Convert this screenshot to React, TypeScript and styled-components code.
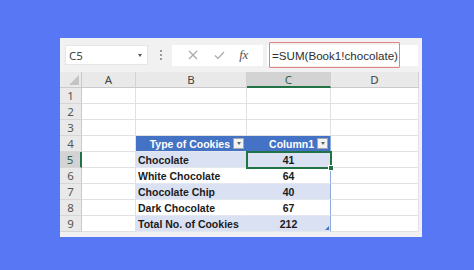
import React from 'react';
import styled, { createGlobalStyle, css } from 'styled-components';

const Global = createGlobalStyle`
  html, body { margin: 0; padding: 0; }
  body {
    width: 474px;
    height: 270px;
    overflow: hidden;
    background: #5877f5;
    font-family: "Liberation Sans", Arial, sans-serif;
  }
`;

const Page = styled.div`
  width: 474px;
  height: 270px;
  box-sizing: border-box;
  padding: 38px 0 0 60px;
  display: flex;
  align-items: flex-start;
`;

const Window = styled.div`
  width: 362px;
  height: 199px;
  background: #f1f1f1;
  display: flex;
  flex-direction: column;
`;

const FormulaBar = styled.div`
  height: 34px;
  display: flex;
  align-items: center;
  padding: 0 4px 0 5px;
  box-sizing: border-box;
`;

const NameBox = styled.div`
  width: 83px;
  height: 20px;
  box-sizing: border-box;
  background: #fff;
  border: 1px solid #e6e6e6;
  display: flex;
  align-items: center;
  justify-content: space-between;
  padding: 0 5px 0 3px;
  font-family: "Noto Sans", "Liberation Sans", sans-serif;
  font-size: 11.5px;
  color: #444;
`;

const Caret = styled.span`
  width: 0;
  height: 0;
  border-left: 2.5px solid transparent;
  border-right: 2.5px solid transparent;
  border-top: 3px solid #555;
`;

const Dots = styled.span`
  width: 2px;
  height: 12px;
  margin: 0 10px 0 12px;
  background-image: radial-gradient(circle, #9a9a9a 0.9px, transparent 1.1px);
  background-size: 2px 4px;
`;

const IconBox = styled.div`
  width: 91px;
  height: 21px;
  background: #fff;
  display: flex;
  align-items: center;
  padding: 0 10px 0 10px;
  box-sizing: border-box;
`;

const IconSlot = styled.span<{ $w: number }>`
  width: ${(p) => p.$w}px;
  display: flex;
  justify-content: center;
  align-items: center;
`;

const Fx = styled.span`
  font-family: "Liberation Serif", "Times New Roman", serif;
  font-style: italic;
  font-size: 13px;
  color: #555;
  letter-spacing: -0.5px;
`;

const FormulaInput = styled.div`
  flex: 1;
  margin-left: 4px;
  height: 21px;
  background: #fff;
  position: relative;
  display: flex;
  align-items: center;
  padding-left: 5px;
  font-family: "Liberation Sans", Arial, sans-serif;
  font-size: 11.6px;
  color: #2e2e2e;
`;

const Highlight = styled.span`
  position: absolute;
  left: 2px;
  top: -3px;
  width: 131px;
  height: 26px;
  box-sizing: border-box;
  border: 1.5px solid #e68181;
  border-radius: 1px;
  pointer-events: none;
`;

const Sheet = styled.div`
  display: grid;
  grid-template-columns: 22px 54px 111px 84px 88px;
  grid-auto-rows: 16px;
  background: #fff;
  width: 359px;
`;

const headFont = css`
  font-family: "Noto Sans", "Liberation Sans", sans-serif;
  font-size: 11.5px;
  color: #444;
  display: flex;
  align-items: center;
  justify-content: center;
  box-sizing: border-box;
`;

const Corner = styled.div`
  ${headFont};
  background: #e9e9e9;
  border-right: 1px solid #c9c9c9;
  border-bottom: 1px solid #c9c9c9;
  position: relative;
  &::after {
    content: '';
    position: absolute;
    right: 2px;
    bottom: 2px;
    width: 0;
    height: 0;
    border-left: 10px solid transparent;
    border-bottom: 10px solid #c4c4c4;
  }
`;

const ColHead = styled.div<{ $active?: boolean }>`
  ${headFont};
  background: ${(p) => (p.$active ? '#d3d3d3' : '#e9e9e9')};
  color: ${(p) => (p.$active ? '#2d6244' : '#444')};
  border-right: 1px solid #d2d2d2;
  border-bottom: ${(p) => (p.$active ? '2px solid #217346' : '1px solid #c9c9c9')};
`;

const RowHead = styled.div<{ $active?: boolean }>`
  ${headFont};
  background: ${(p) => (p.$active ? '#d3d3d3' : '#e9e9e9')};
  color: ${(p) => (p.$active ? '#2d6244' : '#555')};
  border-right: ${(p) => (p.$active ? '2px solid #217346' : '1px solid #c9c9c9')};
  border-bottom: 1px solid #d6d6d6;
`;

type Fill = 'none' | 'head' | 'band' | 'white';

const fills: Record<Fill, string> = {
  none: '#ffffff',
  head: '#4472c4',
  band: '#d9e1f2',
  white: '#ffffff',
};

const Cell = styled.div<{
  $fill?: Fill;
  $align?: 'left' | 'center' | 'right';
  $edge?: boolean;
  $selected?: boolean;
  $handle?: boolean;
}>`
  position: relative;
  box-sizing: border-box;
  display: flex;
  align-items: center;
  justify-content: ${(p) =>
    p.$align === 'center' ? 'center' : p.$align === 'right' ? 'flex-end' : 'flex-start'};
  gap: 3px;
  padding: 0 2px 0 2px;
  background: ${(p) => fills[p.$fill ?? 'none']};
  color: ${(p) => (p.$fill === 'head' ? '#ffffff' : '#1b1b1b')};
  font-family: "Liberation Sans", Arial, sans-serif;
  font-weight: 700;
  font-size: 10.5px;
  white-space: nowrap;
  border-right: 1px solid
    ${(p) => (p.$edge ? '#8eaadb' : p.$fill && p.$fill !== 'none' ? 'transparent' : '#e1e1e1')};
  border-bottom: 1px solid
    ${(p) => (p.$fill && p.$fill !== 'none' ? '#e3e7f0' : '#e1e1e1')};
  ${(p) =>
    p.$selected &&
    css`
      outline: 2px solid #217346;
      outline-offset: -1px;
      z-index: 1;
      &::after {
        content: '';
        position: absolute;
        right: -4px;
        bottom: -4px;
        width: 4px;
        height: 4px;
        background: #217346;
        border: 1px solid #fff;
      }
    `}
  ${(p) =>
    p.$handle &&
    css`
      &::after {
        content: '';
        position: absolute;
        right: 1px;
        bottom: 1px;
        width: 0;
        height: 0;
        border-left: 4px solid transparent;
        border-bottom: 4px solid #4472c4;
      }
    `}
`;

const DropBtn = styled.span`
  width: 11px;
  height: 11px;
  flex: none;
  box-sizing: border-box;
  background: #f3f3f3;
  border: 1px solid #a6a6a6;
  display: flex;
  align-items: center;
  justify-content: center;
  &::before {
    content: '';
    width: 0;
    height: 0;
    border-left: 2.5px solid transparent;
    border-right: 2.5px solid transparent;
    border-top: 3px solid #666;
  }
`;

const rows: { b: string; c: string; band: boolean }[] = [
  { b: 'Chocolate', c: '41', band: true },
  { b: 'White Chocolate', c: '64', band: false },
  { b: 'Chocolate Chip', c: '40', band: true },
  { b: 'Dark Chocolate', c: '67', band: false },
  { b: 'Total No. of Cookies', c: '212', band: true },
];

export default function App() {
  const cols = ['A', 'B', 'C', 'D'];
  return (
    <>
      <Global />
      <Page>
        <Window>
          <FormulaBar>
            <NameBox>
              <span>C5</span>
              <Caret />
            </NameBox>
            <Dots />
            <IconBox>
              <IconSlot $w={22}>
                <svg width="10" height="10" viewBox="0 0 10 10">
                  <path d="M1 1 L9 9 M9 1 L1 9" stroke="#a8a8a8" strokeWidth="1.2" fill="none" />
                </svg>
              </IconSlot>
              <IconSlot $w={30}>
                <svg width="11" height="9" viewBox="0 0 11 9">
                  <path d="M1 4.5 L4 7.5 L10 1" stroke="#a8a8a8" strokeWidth="1.2" fill="none" />
                </svg>
              </IconSlot>
              <IconSlot $w={19}>
                <Fx>fx</Fx>
              </IconSlot>
            </IconBox>
            <FormulaInput>
              =SUM(Book1!chocolate)
              <Highlight />
            </FormulaInput>
          </FormulaBar>
          <Sheet>
            <Corner />
            {cols.map((c) => (
              <ColHead key={c} $active={c === 'C'}>
                {c}
              </ColHead>
            ))}
            {[1, 2, 3].map((r) => (
              <React.Fragment key={r}>
                <RowHead>{r}</RowHead>
                <Cell />
                <Cell />
                <Cell />
                <Cell />
              </React.Fragment>
            ))}
            <RowHead>4</RowHead>
            <Cell />
            <Cell $fill="head" $align="right">
              Type of Cookies
              <DropBtn />
            </Cell>
            <Cell $fill="head" $align="right" $edge>
              Column1
              <DropBtn />
            </Cell>
            <Cell />
            {rows.map((r, i) => {
              const n = i + 5;
              const fill: Fill = r.band ? 'band' : 'white';
              return (
                <React.Fragment key={n}>
                  <RowHead $active={n === 5}>{n}</RowHead>
                  <Cell />
                  <Cell $fill={fill}>{r.b}</Cell>
                  <Cell
                    $fill={fill}
                    $align="center"
                    $edge
                    $selected={n === 5}
                    $handle={n === 9}
                  >
                    {r.c}
                  </Cell>
                  <Cell />
                </React.Fragment>
              );
            })}
          </Sheet>
        </Window>
      </Page>
    </>
  );
}
